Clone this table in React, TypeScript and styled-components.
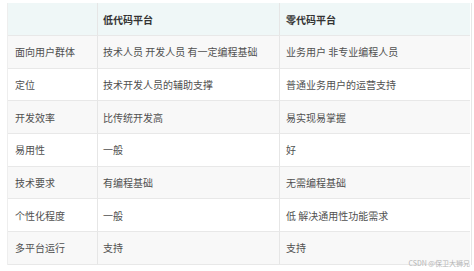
import { FC } from 'react'
import styled, { createGlobalStyle } from 'styled-components'

type Row = [string, string, string]

const rows: Row[] = [
  ['面向用户群体', '技术人员 开发人员 有一定编程基础', '业务用户 非专业编程人员'],
  ['定位', '技术开发人员的辅助支撑', '普通业务用户的运营支持'],
  ['开发效率', '比传统开发高', '易实现易掌握'],
  ['易用性', '一般', '好'],
  ['技术要求', '有编程基础', '无需编程基础'],
  ['个性化程度', '一般', '低 解决通用性功能需求'],
  ['多平台运行', '支持', '支持'],
]

const GlobalStyle = createGlobalStyle`
  html, body {
    margin: 0;
    background: #ffffff;
  }
  body {
    font-family: "Noto Sans CJK SC", "Noto Sans", sans-serif;
  }
`

const App: FC = () => (
  <>
    <GlobalStyle />
    <StyledPage>
      <StyledTable>
        <StyledCell $head $col={0} />
        <StyledCell $head $col={1}>低代码平台</StyledCell>
        <StyledCell $head $col={2}>零代码平台</StyledCell>
        {rows.map((row, i) =>
          row.map((text, c) => (
            <StyledCell key={`${i}-${c}`} $col={c} $shade={i % 2 === 0}>
              {text}
            </StyledCell>
          ))
        )}
      </StyledTable>
      <StyledMark>CSDN @保卫大狮兄</StyledMark>
    </StyledPage>
  </>
)

export default App

const StyledPage = styled.div`
  position: relative;
  width: 474px;
  height: 271px;
  padding: 3px 0 0 7px;
  box-sizing: border-box;
  overflow: hidden;
`

const StyledTable = styled.div`
  display: grid;
  grid-template-columns: 90px 182px 190px;
  grid-template-rows: 33px repeat(7, 32.7px);
  width: 463px;
  border-left: 1px solid #eeeeee;
  border-right: 1px solid #e6e6e6;
`

const StyledCell = styled.div<{ $head?: boolean; $col: number; $shade?: boolean }>`
  display: flex;
  align-items: center;
  padding-left: ${(p) => (p.$col === 0 ? 7 : p.$col === 1 ? 5 : 6)}px;
  border-bottom: 1px solid #e8e8e8;
  border-right: ${(p) => (p.$col < 2 ? '1px solid #e6e6e6' : 'none')};
  background: ${(p) => (p.$head ? '#eff7f7' : p.$shade ? '#f8f8f8' : '#ffffff')};
  font-size: 10px;
  font-weight: ${(p) => (p.$head ? 700 : 400)};
  color: ${(p) => (p.$head ? '#333333' : '#505050')};
  white-space: nowrap;
  box-sizing: border-box;
`

const StyledMark = styled.span`
  position: absolute;
  right: 4px;
  bottom: 3px;
  font-size: 7px;
  color: #b4b4b4;
  white-space: nowrap;
`
